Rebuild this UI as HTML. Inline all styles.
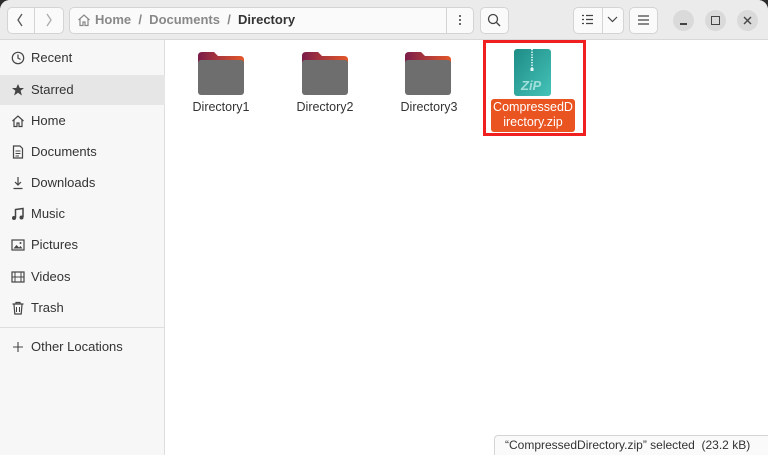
<!DOCTYPE html>
<html><head><meta charset="utf-8"><style>
*{margin:0;padding:0;box-sizing:border-box}
body{width:768px;height:455px;overflow:hidden;background:#2c2c2c;font-family:"Liberation Sans",sans-serif;color:#333;position:relative}
.win{position:absolute;left:0;top:0;width:768px;height:455px;background:#fff;border-radius:10px 10px 0 0;overflow:hidden}
.hb{position:absolute;left:0;top:0;width:768px;height:40px;background:#ebebeb;border-bottom:1px solid #d8d8d8}
.btn{position:absolute;top:7px;height:27px;background:#fafafa;border:1px solid #d4d4d4;border-radius:5px}
.side{position:absolute;left:0;top:40px;width:165px;height:415px;background:#f7f7f7;border-right:1px solid #dedede}
.it{position:absolute;left:0;width:165px;height:30px;font-size:13px;line-height:30px;padding-left:31px;color:#333}
.it svg{position:absolute;left:11px;top:8px}
.lbl{position:absolute;font-size:12.5px;color:#333;text-align:center;width:90px}
.circ{position:absolute;top:10px;width:21px;height:21px;border-radius:50%;background:#dadada}
</style></head><body>
<div class="win">
<div class="hb">
 <div class="btn" style="left:7px;width:57px"></div>
 <div style="position:absolute;left:34px;top:8px;width:1px;height:25px;background:#d4d4d4"></div>
 <svg style="position:absolute;left:15px;top:13px" width="10" height="14"><path d="M7 1L3 7L7 13" stroke="#555" fill="none" stroke-width="1.3"/></svg>
 <svg style="position:absolute;left:44px;top:13px" width="10" height="14"><path d="M3 1L7 7L3 13" stroke="#aaa" fill="none" stroke-width="1.3"/></svg>
 <div class="btn" style="left:69px;width:405px"></div>
 <div style="position:absolute;left:446px;top:8px;width:1px;height:25px;background:#d4d4d4"></div>
 <svg style="position:absolute;left:77px;top:13px" width="14" height="14"><path d="M1.5 7L7 2L12.5 7M3 6V12.5H6V9H8V12.5H11V6" stroke="#888" fill="none" stroke-width="1.2"/></svg>
 <div style="position:absolute;left:95px;top:12px;font-size:13px;font-weight:bold;color:#888;white-space:pre">Home  /  Documents  /  <span style="color:#333">Directory</span></div>
 <div style="position:absolute;left:459px;top:14px;width:2px;height:12px;background:radial-gradient(circle,#555 45%,transparent 50%) 0 0/2px 4px"></div>
 <div class="btn" style="left:480px;width:29px"></div>
 <svg style="position:absolute;left:487px;top:13px" width="15" height="15"><circle cx="6" cy="6" r="4.5" stroke="#444" fill="none" stroke-width="1.3"/><path d="M9.5 9.5L13 13" stroke="#444" stroke-width="1.4"/></svg>
 <div class="btn" style="left:573px;width:51px"></div>
 <div style="position:absolute;left:602px;top:8px;width:1px;height:25px;background:#d4d4d4"></div>
 <svg style="position:absolute;left:582px;top:14px" width="12" height="11"><path d="M0 1.5H2M4 1.5H11M0 5.5H2M4 5.5H11M0 9.5H2M4 9.5H11" stroke="#444" stroke-width="1.3"/></svg>
 <svg style="position:absolute;left:607px;top:16px" width="11" height="7"><path d="M1 1L5.5 5.5L10 1" stroke="#444" fill="none" stroke-width="1.2"/></svg>
 <div class="btn" style="left:629px;width:29px"></div>
 <svg style="position:absolute;left:638px;top:15px" width="11" height="10"><path d="M0 1H11M0 5H11M0 9H11" stroke="#444" stroke-width="1.2"/></svg>
 <div class="circ" style="left:673px"></div><div style="position:absolute;left:680px;top:23px;width:7px;height:1.5px;background:#444"></div>
 <div class="circ" style="left:705px"></div><div style="position:absolute;left:711px;top:16px;width:9px;height:9px;border:1.3px solid #444"></div>
 <div class="circ" style="left:737px"></div><svg style="position:absolute;left:743px;top:16px" width="9" height="9"><path d="M1 1L8 8M8 1L1 8" stroke="#444" stroke-width="1.4"/></svg>
</div>
<div class="side">
 <div class="it" style="top:3px"><svg width="14" height="14"><circle cx="7" cy="7" r="5.7" stroke="#444" fill="none" stroke-width="1.2"/><path d="M7 3.5V7L9.5 8.5" stroke="#444" fill="none" stroke-width="1.2"/></svg>Recent</div>
 <div class="it" style="top:35px;background:#e6e6e6"><svg width="14" height="14"><path d="M7 1L8.8 5H13L9.6 7.8L10.9 12.5L7 9.8L3.1 12.5L4.4 7.8L1 5H5.2Z" fill="#444"/></svg>Starred</div>
 <div class="it" style="top:66px"><svg width="14" height="14"><path d="M1.5 7L7 2L12.5 7M3 6V12.5H6V9H8V12.5H11V6" stroke="#444" fill="none" stroke-width="1.2"/></svg>Home</div>
 <div class="it" style="top:97px"><svg width="14" height="14"><path d="M2.5 1H9L11.5 3.5V13H2.5Z" stroke="#444" fill="none" stroke-width="1.2"/><path d="M4.5 6H9.5M4.5 8.5H9.5M4.5 11H8" stroke="#444"/></svg>Documents</div>
 <div class="it" style="top:128px"><svg width="14" height="14"><path d="M7 1V9M4 6L7 9L10 6M2.5 12.5H11.5" stroke="#444" fill="none" stroke-width="1.2"/></svg>Downloads</div>
 <div class="it" style="top:159px"><svg width="14" height="14"><path d="M4.5 11V2.5L12 1.5V10" stroke="#444" fill="none" stroke-width="1.5"/><circle cx="3" cy="11" r="2" fill="#444"/><circle cx="10.5" cy="10.5" r="2" fill="#444"/></svg>Music</div>
 <div class="it" style="top:190px"><svg width="14" height="14"><rect x="1" y="2" width="12" height="10" stroke="#444" fill="none" stroke-width="1.2"/><path d="M2.5 10.5L5.5 7L8 9.5L9.5 8L11.5 10.5Z" fill="#444"/><circle cx="9.5" cy="5" r="1" fill="#444"/></svg>Pictures</div>
 <div class="it" style="top:222px"><svg width="14" height="14"><rect x="1" y="2" width="12" height="10" stroke="#444" fill="none" stroke-width="1.2"/><path d="M1 7H13M4 2V12M10 2V12" stroke="#444"/></svg>Videos</div>
 <div class="it" style="top:253px"><svg width="14" height="14"><path d="M1.5 3H12.5M5 3V1.5H9V3M3 3.5L3.8 13H10.2L11 3.5" stroke="#444" fill="none" stroke-width="1.2"/><path d="M5.5 6V11M8.5 6V11" stroke="#444"/></svg>Trash</div>
 <div style="position:absolute;left:0;top:287px;width:165px;height:1px;background:#dedede"></div>
 <div class="it" style="top:292px"><svg width="14" height="14"><path d="M7 2V12M2 7H12" stroke="#444" stroke-width="1.1"/></svg>Other Locations</div>
</div>
<svg style="position:absolute;left:0;top:0" width="768" height="455">
 <defs><linearGradient id="tab" x1="0" x2="1"><stop offset="0" stop-color="#7a1d4a"/><stop offset="1" stop-color="#e4572a"/></linearGradient>
 <linearGradient id="zp" x1="0" y1="0" x2="1" y2="1"><stop offset="0" stop-color="#1e8c86"/><stop offset="1" stop-color="#45c3b8"/></linearGradient></defs>
 <g id="f"><path d="M198 56Q198 52 202 52H214L218 56H240Q244 56 244 60V66H198Z" fill="url(#tab)"/><rect x="198" y="60" width="46" height="35" rx="3" fill="#6e6e6e"/></g>
 <use href="#f" x="104"/><use href="#f" x="207"/>
 <rect x="514" y="49" width="37" height="47" rx="3" fill="url(#zp)"/>
 <path d="M532 49V70" stroke="#cfeeee" stroke-width="2" stroke-dasharray="1.3 1.3"/><rect x="530.5" y="68" width="3" height="3" fill="#e6f6f6"/>
 <text x="521" y="90" font-family="Liberation Sans" font-weight="bold" font-style="italic" font-size="13" fill="#9fe0da">ZiP</text>
 <rect x="491" y="99" width="84" height="33" rx="3" fill="#e95420"/>
 <rect x="484.5" y="41.5" width="100" height="93" fill="none" stroke="#f02020" stroke-width="3"/>
</svg>
<div class="lbl" style="left:176px;top:100px">Directory1</div>
<div class="lbl" style="left:280px;top:100px">Directory2</div>
<div class="lbl" style="left:384px;top:100px">Directory3</div>
<div class="lbl" style="left:488px;top:100px;color:#fff;line-height:15px">CompressedD<br>irectory.zip</div>
<div style="position:absolute;left:494px;top:435px;width:280px;height:22px;background:#fafafa;border:1px solid #d4d4d4;border-radius:4px 0 0 0;font-size:12px;line-height:19px;padding-left:10px;color:#333;white-space:pre">“CompressedDirectory.zip” selected  (23.2 kB)</div>
</div>
</body></html>
